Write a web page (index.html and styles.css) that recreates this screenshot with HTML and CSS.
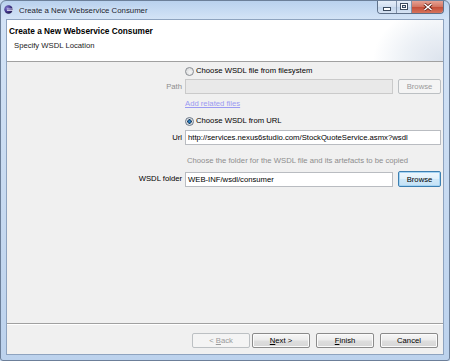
FILE: index.html
```html
<!DOCTYPE html>
<html lang="en">
<head>
    <meta charset="UTF-8">
    <title>Create a New Webservice Consumer</title>
    <link rel="stylesheet" href="styles.css">
</head>
<body>
    <div class="window">
        <!-- Title bar -->
        <div class="titlebar">
            <svg class="app-icon" width="9" height="9" viewBox="0 0 9 9">
                <defs>
                    <radialGradient id="sphere" cx="0.35" cy="0.35" r="0.7">
                        <stop offset="0" stop-color="#8d80d6"/>
                        <stop offset="0.6" stop-color="#3f3488"/>
                        <stop offset="1" stop-color="#1f1848"/>
                    </radialGradient>
                </defs>
                <circle cx="4.5" cy="4.5" r="4.2" fill="url(#sphere)"/>
                <rect x="3" y="3.6" width="6" height="0.8" fill="#e8e6f6"/>
                <rect x="3" y="5" width="6" height="0.8" fill="#e8e6f6"/>
            </svg>
            <span class="title">Create a New Webservice Consumer</span>
            <div class="caption-buttons">
                <span class="cap cap-min">
                    <svg width="8" height="4" viewBox="0 0 8 4"><rect x="0.5" y="0.5" width="7" height="3" fill="#fff" stroke="#3b4a5e" stroke-width="1"/></svg>
                </span>
                <span class="cap cap-max">
                    <svg width="8" height="7" viewBox="0 0 8 7"><rect x="0.5" y="0.5" width="7" height="6" fill="none" stroke="#3b4a5e"/><rect x="1.5" y="1.5" width="5" height="4" fill="none" stroke="#fff"/><rect x="2.5" y="2.5" width="3" height="2" fill="none" stroke="#3b4a5e"/></svg>
                </span>
                <span class="cap cap-close">
                    <svg width="10" height="8" viewBox="0 0 10 8"><path d="M1.5 1 L8.5 7 M8.5 1 L1.5 7" stroke="#5a1d16" stroke-width="3"/><path d="M1.5 1 L8.5 7 M8.5 1 L1.5 7" stroke="#fff" stroke-width="1.6"/></svg>
                </span>
            </div>
        </div>

        <!-- Dialog client area -->
        <div class="client">
            <div class="banner">
                <div class="banner-title">Create a New Webservice Consumer</div>
                <div class="banner-desc">Specify WSDL Location</div>
            </div>

            <div class="form">
                <div class="row row-radio1">
                    <span></span>
                    <label class="radio"><span class="radio-dot"></span>Choose WSDL file from filesystem</label>
                </div>
                <div class="row row-path">
                    <span class="label disabled">Path</span>
                    <div class="field-pair">
                        <div class="field field-disabled"></div>
                        <button class="btn btn-disabled">Browse</button>
                    </div>
                </div>
                <div class="row row-link">
                    <span></span>
                    <a class="link">Add related files</a>
                </div>
                <div class="row row-radio2">
                    <span></span>
                    <label class="radio"><span class="radio-dot checked"></span>Choose WSDL from URL</label>
                </div>
                <div class="row row-url">
                    <span class="label">Url</span>
                    <div class="field">http://services.nexus6studio.com/StockQuoteService.asmx?wsdl</div>
                </div>
                <div class="row row-help">
                    <span></span>
                    <span class="help">Choose the folder for the WSDL file and its artefacts to be copied</span>
                </div>
                <div class="row row-folder">
                    <span class="label">WSDL folder</span>
                    <div class="field-pair">
                        <div class="field">WEB-INF/wsdl/consumer</div>
                        <button class="btn btn-focus">Browse</button>
                    </div>
                </div>
            </div>

            <div class="footer">
                <button class="btn btn-disabled btn-nav">&lt; <u>B</u>ack</button>
                <button class="btn btn-nav btn-next"><u>N</u>ext &gt;</button>
                <button class="btn btn-nav"><u>F</u>inish</button>
                <button class="btn btn-nav">Cancel</button>
            </div>
        </div>
    </div>
</body>
</html>
```

FILE: styles.css
```css
body {
    margin: 0;
    padding: 0;
    font-family: 'Liberation Sans', Arial, sans-serif;
    font-size: 7.7px;
    color: #000;
    background: #c9dbf1;
}

.window {
    width: 450px;
    height: 361px;
    box-sizing: border-box;
    display: flex;
    flex-direction: column;
    border: 1px solid #6c7f99;
    border-radius: 6px 6px 3px 3px;
    background: linear-gradient(#b9d1ee, #d3e3f6 18px, #c6d9f0 60%, #bcd2ed);
    overflow: hidden;
}

/* Title bar */
.titlebar {
    height: 18px;
    display: flex;
    align-items: center;
    padding-left: 3px;
}

.app-icon {
    margin-right: 6px;
    margin-top: -1px;
}

.title {
    font-size: 7.8px;
    color: #1c2430;
    text-shadow: 0 0 4px #e8f2fc;
}

.caption-buttons {
    margin-left: auto;
    margin-right: 5px;
    align-self: flex-start;
    margin-top: -1px;
    display: flex;
    height: 13px;
    border: 1px solid #5f718a;
    border-top: none;
    border-radius: 0 0 4px 4px;
    overflow: hidden;
}

.cap {
    display: flex;
    align-items: center;
    justify-content: center;
    height: 13px;
}

.cap-min {
    width: 18px;
    background: linear-gradient(#e8f0fa, #d3e0f1 50%, #c0d3ea 51%, #d6e3f3);
    border-right: 1px solid #8192aa;
}

.cap-min svg {
    margin-top: 4px;
}

.cap-max {
    width: 14px;
    background: linear-gradient(#e8f0fa, #d3e0f1 50%, #c0d3ea 51%, #d6e3f3);
    border-right: 1px solid #8192aa;
}

.cap-close {
    width: 31px;
    background: linear-gradient(#e9a99c, #d47764 50%, #c24a35 51%, #d6735c);
}

/* Client area */
.client {
    flex: 1;
    margin: 0 5px 5px;
    display: flex;
    flex-direction: column;
    border: 1px solid #8ea3bf;
    background: #f0f0f0;
}

.banner {
    height: 42px;
    box-sizing: border-box;
    padding: 6px 0 0 2px;
    background: radial-gradient(ellipse 70px 55px at 100% 100%, #dce3ed 0%, #edf1f6 55%, rgba(255, 255, 255, 0) 100%), #fff;
    border-bottom: 1px solid #a0a0a0;
}

.banner-title {
    font-weight: 700;
    font-size: 8.3px;
    line-height: 10px;
    color: #000;
}

.banner-desc {
    margin-top: 5px;
    padding-left: 5px;
    line-height: 10px;
    color: #222;
}

/* Form */
.form {
    flex: 1;
    padding: 4px 2px 0 0;
    display: flex;
    flex-direction: column;
}

.row {
    display: grid;
    grid-template-columns: 175px 1fr;
    column-gap: 3px;
    align-items: center;
    line-height: 10px;
}

.row-path { margin-top: 3px; }
.row-link { margin-top: 5px; }
.row-radio2 { margin-top: 7px; }
.row-url { margin-top: 4px; }
.row-help { margin-top: 11px; }
.row-folder { margin-top: 5px; }

.label {
    text-align: right;
}

.disabled {
    color: #8d8d8d;
}

.radio {
    display: flex;
    align-items: center;
    gap: 2px;
}

.radio-dot {
    width: 7px;
    height: 7px;
    border: 1px solid #8a8e93;
    border-radius: 50%;
    background: radial-gradient(circle at 60% 60%, #f6f6f6, #d2d4d6);
}

.radio-dot.checked {
    border-color: #6a7787;
    background: radial-gradient(circle, #3a8fd0 0, #1b5f98 1.4px, #203a55 2px, #d9dee4 2.4px, #eef0f2);
}

.link {
    color: #9a9af2;
    text-decoration: underline;
}

.help {
    color: #8d8d8d;
    padding-left: 2px;
}

.field-pair {
    display: flex;
    gap: 5px;
    align-items: center;
}

.field {
    flex: 1;
    height: 15px;
    box-sizing: border-box;
    border: 1px solid #b9bcc1;
    background: #fff;
    padding-left: 2px;
    line-height: 13px;
    white-space: nowrap;
    overflow: hidden;
}

.field-disabled {
    background: #e9e9e9;
    border-color: #cacaca;
}

.btn {
    width: 43px;
    height: 15px;
    padding: 0;
    box-sizing: border-box;
    font-family: 'Liberation Sans', Arial, sans-serif;
    font-size: 7.7px;
    color: #000;
    border: 1px solid #8b8b8b;
    border-radius: 2px;
    background: linear-gradient(#f7f7f7, #ececec 48%, #dedede 52%, #d6d6d6);
    box-shadow: inset 0 0 0 1px #fbfbfb;
}

.btn-disabled {
    color: #9a9a9a;
    border-color: #bcc0c3;
    background: #f4f4f4;
    box-shadow: none;
}

.btn-focus {
    height: 16px;
    border-color: #3c7fb1;
    background: linear-gradient(#eef7fd, #e1f1fb 48%, #cfe8f8 52%, #c4e2f6);
    box-shadow: inset 0 0 0 1px #a6d4f3;
}

/* Wizard buttons */
.footer {
    height: 31px;
    box-sizing: border-box;
    border-top: 1px solid #a0a0a0;
    box-shadow: inset 0 1px 0 #fff;
    padding: 9px 5px 0 0;
    display: flex;
    justify-content: flex-end;
    align-items: flex-start;
    gap: 6px;
}

.btn-nav {
    width: 58px;
}

.btn-next {
    margin-left: -4px;
}
```
